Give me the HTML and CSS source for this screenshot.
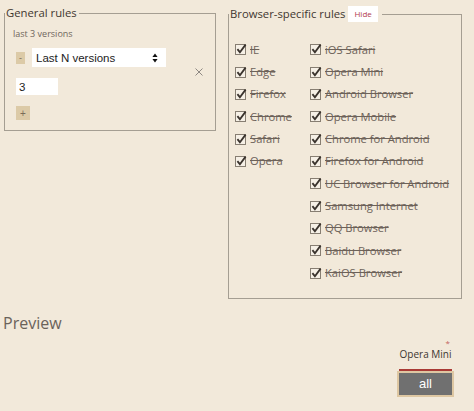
FILE: index.html
```html
<!DOCTYPE html>
<html>
<head>
<meta charset="utf-8">
<link rel="stylesheet" href="styles.css">
</head>
<body>
<div class="rules">
  <fieldset class="box general">
    <legend class="legend">General rules</legend>
    <div class="summary">last 3 versions</div>
    <div class="rule">
      <div class="rule-body">
        <div class="rule-line">
          <button class="mini-btn minus">-</button>
          <div class="select-wrap">
            <select class="select"><option>Last N versions</option></select>
            <span class="arrows"><svg width="6" height="10" viewBox="0 0 6 10"><path d="M3 0.5L5.6 4H0.4Z M3 9.5L5.6 6H0.4Z" fill="#111"/></svg></span>
          </div>
        </div>
        <input class="num" type="text" value="3">
      </div>
      <span class="remove"><svg width="8" height="8" viewBox="0 0 8 8"><path d="M0.5 0.5L7.5 7.5M7.5 0.5L0.5 7.5" stroke="#8e8883" stroke-width="1"/></svg></span>
    </div>
    <button class="mini-btn plus">+</button>
  </fieldset>

  <fieldset class="box specific">
    <legend class="legend">Browser-specific rules <span class="hide">Hide</span></legend>
    <div class="cols">
      <div class="col col1">
        <label class="item"><svg class="cb" width="12" height="12" viewBox="0 0 12 12"><rect x="0.5" y="1.5" width="10" height="10" fill="#f6f0e6" stroke="#877e72"/><path d="M2.4 6.2L4.9 9.2L10.6 1.6" fill="none" stroke="#3a332d" stroke-width="1.8"/></svg><span class="name">IE</span></label>
        <label class="item"><svg class="cb" width="12" height="12" viewBox="0 0 12 12"><rect x="0.5" y="1.5" width="10" height="10" fill="#f6f0e6" stroke="#877e72"/><path d="M2.4 6.2L4.9 9.2L10.6 1.6" fill="none" stroke="#3a332d" stroke-width="1.8"/></svg><span class="name">Edge</span></label>
        <label class="item"><svg class="cb" width="12" height="12" viewBox="0 0 12 12"><rect x="0.5" y="1.5" width="10" height="10" fill="#f6f0e6" stroke="#877e72"/><path d="M2.4 6.2L4.9 9.2L10.6 1.6" fill="none" stroke="#3a332d" stroke-width="1.8"/></svg><span class="name">Firefox</span></label>
        <label class="item"><svg class="cb" width="12" height="12" viewBox="0 0 12 12"><rect x="0.5" y="1.5" width="10" height="10" fill="#f6f0e6" stroke="#877e72"/><path d="M2.4 6.2L4.9 9.2L10.6 1.6" fill="none" stroke="#3a332d" stroke-width="1.8"/></svg><span class="name">Chrome</span></label>
        <label class="item"><svg class="cb" width="12" height="12" viewBox="0 0 12 12"><rect x="0.5" y="1.5" width="10" height="10" fill="#f6f0e6" stroke="#877e72"/><path d="M2.4 6.2L4.9 9.2L10.6 1.6" fill="none" stroke="#3a332d" stroke-width="1.8"/></svg><span class="name">Safari</span></label>
        <label class="item"><svg class="cb" width="12" height="12" viewBox="0 0 12 12"><rect x="0.5" y="1.5" width="10" height="10" fill="#f6f0e6" stroke="#877e72"/><path d="M2.4 6.2L4.9 9.2L10.6 1.6" fill="none" stroke="#3a332d" stroke-width="1.8"/></svg><span class="name">Opera</span></label>
      </div>
      <div class="col col2">
        <label class="item"><svg class="cb" width="12" height="12" viewBox="0 0 12 12"><rect x="0.5" y="1.5" width="10" height="10" fill="#f6f0e6" stroke="#877e72"/><path d="M2.4 6.2L4.9 9.2L10.6 1.6" fill="none" stroke="#3a332d" stroke-width="1.8"/></svg><span class="name">iOS Safari</span></label>
        <label class="item"><svg class="cb" width="12" height="12" viewBox="0 0 12 12"><rect x="0.5" y="1.5" width="10" height="10" fill="#f6f0e6" stroke="#877e72"/><path d="M2.4 6.2L4.9 9.2L10.6 1.6" fill="none" stroke="#3a332d" stroke-width="1.8"/></svg><span class="name">Opera Mini</span></label>
        <label class="item"><svg class="cb" width="12" height="12" viewBox="0 0 12 12"><rect x="0.5" y="1.5" width="10" height="10" fill="#f6f0e6" stroke="#877e72"/><path d="M2.4 6.2L4.9 9.2L10.6 1.6" fill="none" stroke="#3a332d" stroke-width="1.8"/></svg><span class="name">Android Browser</span></label>
        <label class="item"><svg class="cb" width="12" height="12" viewBox="0 0 12 12"><rect x="0.5" y="1.5" width="10" height="10" fill="#f6f0e6" stroke="#877e72"/><path d="M2.4 6.2L4.9 9.2L10.6 1.6" fill="none" stroke="#3a332d" stroke-width="1.8"/></svg><span class="name">Opera Mobile</span></label>
        <label class="item"><svg class="cb" width="12" height="12" viewBox="0 0 12 12"><rect x="0.5" y="1.5" width="10" height="10" fill="#f6f0e6" stroke="#877e72"/><path d="M2.4 6.2L4.9 9.2L10.6 1.6" fill="none" stroke="#3a332d" stroke-width="1.8"/></svg><span class="name">Chrome for Android</span></label>
        <label class="item"><svg class="cb" width="12" height="12" viewBox="0 0 12 12"><rect x="0.5" y="1.5" width="10" height="10" fill="#f6f0e6" stroke="#877e72"/><path d="M2.4 6.2L4.9 9.2L10.6 1.6" fill="none" stroke="#3a332d" stroke-width="1.8"/></svg><span class="name">Firefox for Android</span></label>
        <label class="item"><svg class="cb" width="12" height="12" viewBox="0 0 12 12"><rect x="0.5" y="1.5" width="10" height="10" fill="#f6f0e6" stroke="#877e72"/><path d="M2.4 6.2L4.9 9.2L10.6 1.6" fill="none" stroke="#3a332d" stroke-width="1.8"/></svg><span class="name">UC Browser for Android</span></label>
        <label class="item"><svg class="cb" width="12" height="12" viewBox="0 0 12 12"><rect x="0.5" y="1.5" width="10" height="10" fill="#f6f0e6" stroke="#877e72"/><path d="M2.4 6.2L4.9 9.2L10.6 1.6" fill="none" stroke="#3a332d" stroke-width="1.8"/></svg><span class="name">Samsung Internet</span></label>
        <label class="item"><svg class="cb" width="12" height="12" viewBox="0 0 12 12"><rect x="0.5" y="1.5" width="10" height="10" fill="#f6f0e6" stroke="#877e72"/><path d="M2.4 6.2L4.9 9.2L10.6 1.6" fill="none" stroke="#3a332d" stroke-width="1.8"/></svg><span class="name">QQ Browser</span></label>
        <label class="item"><svg class="cb" width="12" height="12" viewBox="0 0 12 12"><rect x="0.5" y="1.5" width="10" height="10" fill="#f6f0e6" stroke="#877e72"/><path d="M2.4 6.2L4.9 9.2L10.6 1.6" fill="none" stroke="#3a332d" stroke-width="1.8"/></svg><span class="name">Baidu Browser</span></label>
        <label class="item"><svg class="cb" width="12" height="12" viewBox="0 0 12 12"><rect x="0.5" y="1.5" width="10" height="10" fill="#f6f0e6" stroke="#877e72"/><path d="M2.4 6.2L4.9 9.2L10.6 1.6" fill="none" stroke="#3a332d" stroke-width="1.8"/></svg><span class="name">KaiOS Browser</span></label>
      </div>
    </div>
  </fieldset>
</div>

<h2 class="preview-title">Preview</h2>
<div class="preview-list">
  <div class="browser">
    <div class="browser-name">Opera Mini<span class="star">*</span></div>
    <div class="bar"></div>
    <div class="version">all</div>
  </div>
</div>
</body>
</html>
```

FILE: styles.css
```css
html, body {
  margin: 0;
  padding: 0;
  background: #f2e9da;
}
body {
  font-family: "Open Sans", "Liberation Sans", sans-serif;
  color: #4b423a;
  width: 474px;
  height: 411px;
  overflow: hidden;
}
.rules {
  display: flex;
  align-items: flex-start;
  gap: 12px;
  padding-left: 4px;
}
.box {
  margin: 5px 0 0 0;
  padding: 0;
  border: 1px solid #a59e92;
  box-sizing: border-box;
  min-width: 0;
}
.legend {
  padding: 0 2px 0 1px;
  font-size: 11.3px;
  line-height: 16px;
  color: #3f3730;
}
.general {
  width: 212px;
  padding: 0 0 10px 0;
}
.summary {
  margin: 7px 0 0 8px;
  font-size: 9px;
  line-height: 12px;
  color: #6f665c;
}
.rule {
  display: flex;
  align-items: center;
  margin: 8px 0 0 11px;
}
.rule-body {
  display: flex;
  flex-direction: column;
  align-items: flex-start;
}
.rule-line {
  display: flex;
  align-items: center;
  gap: 7px;
}
.mini-btn {
  border: none;
  background: #dccaa7;
  color: #7a6b58;
  font-family: "Liberation Sans", sans-serif;
  padding: 0;
  display: flex;
  align-items: center;
  justify-content: center;
}
.minus {
  width: 9px;
  height: 12px;
  font-size: 9px;
}
.plus {
  width: 14px;
  height: 14px;
  font-size: 10px;
  margin: 11px 0 0 11px;
}
.select-wrap {
  position: relative;
}
.select {
  appearance: none;
  -webkit-appearance: none;
  width: 134px;
  height: 19px;
  border: none;
  border-radius: 0;
  background: #fff;
  font-family: "Liberation Sans", sans-serif;
  font-size: 11.5px;
  color: #222;
  padding: 0 0 0 4px;
  margin: 0;
  display: block;
}
.arrows {
  position: absolute;
  right: 8px;
  top: 5px;
  display: block;
  line-height: 0;
}
.num {
  margin-top: 11px;
  width: 42px;
  height: 17px;
  box-sizing: border-box;
  border: none;
  background: #fff;
  padding: 0 3px;
  font-family: "Liberation Sans", sans-serif;
  font-size: 11.5px;
  color: #222;
}
.remove {
  margin-left: 29px;
  line-height: 0;
}
.specific {
  width: 234px;
  padding: 0 0 14px 0;
}
.specific .legend {
  line-height: 18px;
  display: flex;
  align-items: center;
}
.hide {
  display: inline-block;
  background: #fff;
  color: #b23a4c;
  font-size: 8px;
  line-height: 16px;
  padding: 0 6px;
  margin-left: 3px;
  margin-right: 2px;
}
.cols {
  display: flex;
  padding: 15px 0 0 6px;
}
.col1 {
  width: 75px;
}
.item {
  display: flex;
  align-items: center;
  height: 22.35px;
  font-size: 11.2px;
  color: #6d6259;
}
.cb {
  flex: none;
  margin-right: 3px;
}
.name {
  text-decoration: line-through;
}
.preview-title {
  margin: 13px 0 0 3px;
  font-size: 16px;
  line-height: 22px;
  font-weight: 400;
  color: #6a625a;
}
.preview-list {
  display: flex;
  justify-content: flex-end;
  padding-right: 20px;
}
.browser {
  width: 57px;
  display: flex;
  flex-direction: column;
}
.browser-name {
  position: relative;
  margin-top: 13px;
  font-size: 10px;
  line-height: 14px;
  text-align: center;
  color: #3d3530;
}
.star {
  position: absolute;
  right: 4px;
  top: -8px;
  font-size: 8px;
  line-height: 8px;
  color: #c2655e;
}
.bar {
  height: 2px;
  margin: 8px 2px 0;
  background: #a93a35;
}
.version {
  height: 22px;
  border: 2px solid #dec7a2;
  background: #707070;
  color: #fff;
  font-family: "Liberation Sans", sans-serif;
  font-size: 13px;
  line-height: 22px;
  text-align: center;
}
```
